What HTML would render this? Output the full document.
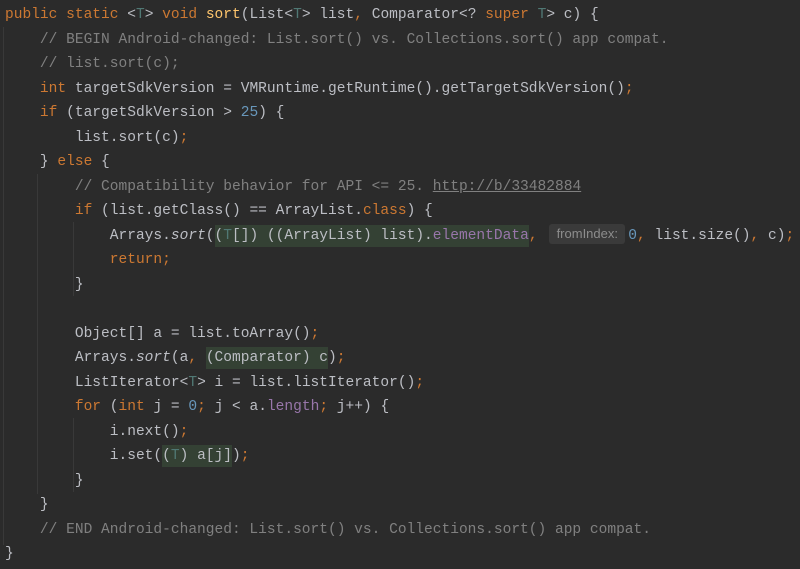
<!DOCTYPE html>
<html><head><style>
html,body{margin:0;padding:0;background:#2b2b2b;width:800px;height:569px;overflow:hidden}
pre{position:absolute;left:5px;top:3px;margin:0;font-family:"Liberation Mono","DejaVu Sans Mono",monospace;font-size:14.55px;line-height:24.5px;color:#bcbec4;white-space:pre}
.k{color:#cc7832}.c{color:#808080}.t{color:#507874}.m{color:#ffc66d}.f{color:#9876aa}.n{color:#6897bb}.i{font-style:italic}
.h{background:#344134;padding:3px 0}
.u{text-decoration:underline}
.hint{display:inline-block;width:76px;margin-left:3px;margin-right:3px;background:#3a3a3a;color:#8c8c8c;font-family:"Liberation Sans",sans-serif;font-size:13px;line-height:20px;text-align:center;border-radius:3px;vertical-align:1px}
.g{position:absolute;width:1px;background:#393939}
</style></head><body>
<div class="g" style="left:3px;top:27px;height:518px"></div>
<div class="g" style="left:37px;top:174px;height:320px"></div>
<div class="g" style="left:73px;top:222px;height:74px"></div>
<div class="g" style="left:73px;top:418px;height:74px"></div>
<pre><span class="k">public static</span> &lt;<span class="t">T</span>&gt; <span class="k">void</span> <span class="m">sort</span>(List&lt;<span class="t">T</span>&gt; list<span class="k">,</span> Comparator&lt;? <span class="k">super</span> <span class="t">T</span>&gt; c) {
    <span class="c">// BEGIN Android-changed: List.sort() vs. Collections.sort() app compat.</span>
    <span class="c">// list.sort(c);</span>
    <span class="k">int</span> targetSdkVersion = VMRuntime.<span>getRuntime</span>().getTargetSdkVersion()<span class="k">;</span>
    <span class="k">if</span> (targetSdkVersion &gt; <span class="n">25</span>) {
        list.sort(c)<span class="k">;</span>
    } <span class="k">else</span> {
        <span class="c">// Compatibility behavior for API &lt;= 25. <span class="u">http://b/33482884</span></span>
        <span class="k">if</span> (list.getClass() == ArrayList.<span class="k">class</span>) {
            Arrays.<span class="i">sort</span>(<span class="h">(<span class="t">T</span>[]) ((ArrayList) list).<span class="f">elementData</span></span><span class="k">,</span> <span class="hint">fromIndex:</span><span class="n">0</span><span class="k">,</span> list.size()<span class="k">,</span> c)<span class="k">;</span>
            <span class="k">return;</span>
        }

        Object[] a = list.toArray()<span class="k">;</span>
        Arrays.<span class="i">sort</span>(a<span class="k">,</span> <span class="h">(Comparator) c</span>)<span class="k">;</span>
        ListIterator&lt;<span class="t">T</span>&gt; i = list.listIterator()<span class="k">;</span>
        <span class="k">for</span> (<span class="k">int</span> j = <span class="n">0</span><span class="k">;</span> j &lt; a.<span class="f">length</span><span class="k">;</span> j++) {
            i.next()<span class="k">;</span>
            i.set(<span class="h">(<span class="t">T</span>) a[j]</span>)<span class="k">;</span>
        }
    }
    <span class="c">// END Android-changed: List.sort() vs. Collections.sort() app compat.</span>
}</pre>
</body></html>
